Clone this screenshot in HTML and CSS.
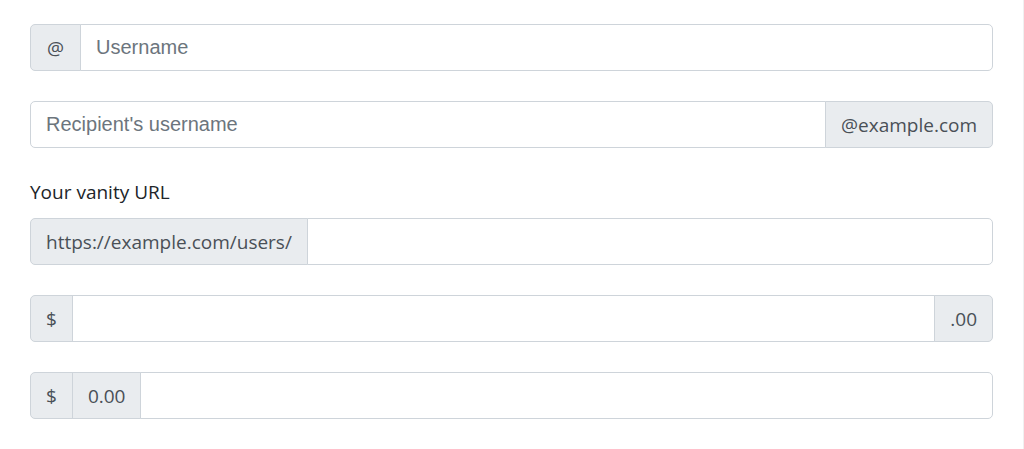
FILE: index.html
```html
<!DOCTYPE html>
<html lang="en">
<head>
<meta charset="utf-8">
<title>Input groups</title>
<link rel="stylesheet" href="styles.css">
</head>
<body>
<div class="page">
  <div class="group">
    <span class="addon addon-at">@</span>
    <input class="field" type="text" placeholder="Username">
  </div>
  <div class="group">
    <input class="field" type="text" placeholder="Recipient's username">
    <span class="addon">@example.com</span>
  </div>
  <label class="label" for="basic-url">Your vanity URL</label>
  <div class="group">
    <span class="addon">https://example.com/users/</span>
    <input class="field" id="basic-url" type="text">
  </div>
  <div class="group">
    <span class="addon">$</span>
    <input class="field" type="text">
    <span class="addon">.00</span>
  </div>
  <div class="group">
    <span class="addon">$</span>
    <span class="addon">0.00</span>
    <input class="field" type="text">
  </div>
</div>
</body>
</html>
```
FILE: styles.css
```css
html, body {
  margin: 0;
  padding: 0;
  background: #fff;
}
body {
  font-family: "Open Sans", "Noto Sans", sans-serif;
  color: #212529;
  font-size: 19px;
  border-right: 1px solid #f0f0f0;
  min-height: 449px;
  box-sizing: border-box;
}
.page {
  width: 963px;
  padding: 24px 0 0 30px;
}
.group {
  display: flex;
  height: 47px;
  margin-bottom: 30px;
}
.addon {
  display: flex;
  align-items: center;
  padding: 0 15px;
  background: #e9ecef;
  border: 1px solid #ced4da;
  color: #495057;
  font-size: 19px;
  white-space: nowrap;
}
.addon-at {
  padding: 0 16px;
}
.addon + .addon,
.field + .addon,
.addon + .field {
  margin-left: -1px;
}
.field {
  flex: 1;
  min-width: 0;
  height: 47px;
  box-sizing: border-box;
  border: 1px solid #ced4da;
  padding: 0 15px;
  font-family: "Liberation Sans", Arial, sans-serif;
  font-size: 20px;
  color: #495057;
  background: #fff;
  outline: none;
}
.field::placeholder {
  color: #6c757d;
}
.group > :first-child {
  border-radius: 5px 0 0 5px;
}
.group > :last-child {
  border-radius: 0 5px 5px 0;
}
.label {
  display: block;
  line-height: 29px;
  margin-bottom: 11px;
  color: #212529;
}
```
